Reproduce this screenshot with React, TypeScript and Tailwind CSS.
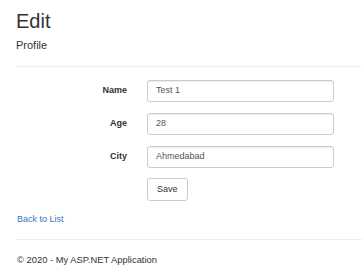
import React from "react";

export default function App() {
  const fields = [
    { label: "Name", value: "Test 1" },
    { label: "Age", value: "28" },
    { label: "City", value: "Ahmedabad" },
  ];
  return (
    <div
      className="w-[362px] h-[278px] bg-white text-[#333] overflow-hidden"
      style={{ fontFamily: '"Liberation Sans", Arial, sans-serif' }}
    >
      <div className="pl-4">
        <h2 className="mt-[10px] text-[20px] leading-[22px] font-normal">Edit</h2>
        <h4 className="mt-[7px] text-[11px] leading-[13px] font-normal">Profile</h4>
        <div className="mt-[14px] h-px bg-[#eee]" />
        <div className="mt-[13px] flex flex-col gap-[11px]">
          {fields.map((f) => (
            <div key={f.label} className="flex items-center">
              <label className="w-[111px] text-right text-[9px] font-bold">{f.label}</label>
              <div className="ml-[20px] w-[187px] h-[22px] border border-[#ccc] rounded-[3px] flex items-center px-[8px] text-[9px] text-[#555] shadow-[inset_0_1px_1px_rgba(0,0,0,0.075)]">
                {f.value}
              </div>
            </div>
          ))}
          <div className="flex -mt-px">
            <div className="ml-[131px] h-[23px] px-[9px] border border-[#ccc] rounded-[3px] flex items-center text-[9px] text-[#333] bg-white">
              Save
            </div>
          </div>
        </div>
        <div className="mt-[12px] pl-px text-[9px] leading-[12px] text-[#337ab7]">Back to List</div>
        <div className="mt-[14px] h-px bg-[#eee]" />
        <div className="mt-[14px] pl-px text-[9.4px] leading-[12px]">© 2020 - My ASP.NET Application</div>
      </div>
    </div>
  );
}
